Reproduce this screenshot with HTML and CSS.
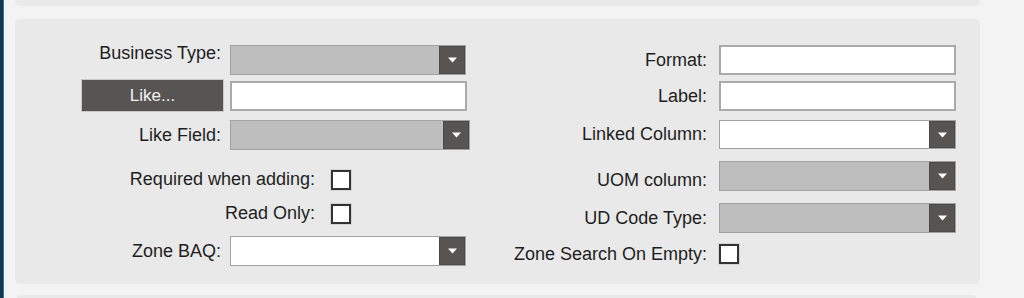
FILE: index.html
```html
<!DOCTYPE html>
<html>
<head>
<meta charset="utf-8">
<link rel="stylesheet" href="styles.css">
</head>
<body>
<div class="strip"></div>
<div class="main">
  <div class="panel-top"></div>
  <div class="panel">
    <div class="col col-left">
      <div class="row h30">
        <label class="lbl lbl-up">Business Type:</label>
        <div class="select disabled w236"><div class="sel-val"></div><div class="arrow"><svg width="9" height="6" viewBox="0 0 9 6"><polygon points="0,0.5 9,0.5 4.5,5.5" fill="#fff"/></svg></div></div>
      </div>
      <div class="row h33 mt4">
        <button class="like-btn">Like...</button>
        <div class="textbox w237"></div>
      </div>
      <div class="row h30 mt8">
        <label class="lbl">Like Field:</label>
        <div class="select disabled w240"><div class="sel-val"></div><div class="arrow"><svg width="9" height="6" viewBox="0 0 9 6"><polygon points="0,0.5 9,0.5 4.5,5.5" fill="#fff"/></svg></div></div>
      </div>
      <div class="row h27 mt16 chkrow">
        <label class="lbl lbl-wide">Required when adding:</label>
        <div class="checkbox"></div>
      </div>
      <div class="row h27 mt7 chkrow">
        <label class="lbl lbl-wide">Read Only:</label>
        <div class="checkbox"></div>
      </div>
      <div class="row h30 mt9">
        <label class="lbl">Zone BAQ:</label>
        <div class="select w236"><div class="sel-val"></div><div class="arrow"><svg width="9" height="6" viewBox="0 0 9 6"><polygon points="0,0.5 9,0.5 4.5,5.5" fill="#fff"/></svg></div></div>
      </div>
    </div>
    <div class="col col-right">
      <div class="row h30">
        <label class="lbl rl">Format:</label>
        <div class="textbox w237"></div>
      </div>
      <div class="row h30 mt6">
        <label class="lbl rl">Label:</label>
        <div class="textbox w237"></div>
      </div>
      <div class="row h29 mt9">
        <label class="lbl rl">Linked Column:</label>
        <div class="select w237"><div class="sel-val"></div><div class="arrow"><svg width="9" height="6" viewBox="0 0 9 6"><polygon points="0,0.5 9,0.5 4.5,5.5" fill="#fff"/></svg></div></div>
      </div>
      <div class="row h30 mt12">
        <label class="lbl rl lbl-down">UOM column:</label>
        <div class="select disabled w237"><div class="sel-val"></div><div class="arrow"><svg width="9" height="6" viewBox="0 0 9 6"><polygon points="0,0.5 9,0.5 4.5,5.5" fill="#fff"/></svg></div></div>
      </div>
      <div class="row h30 mt12">
        <label class="lbl rl">UD Code Type:</label>
        <div class="select disabled w237"><div class="sel-val"></div><div class="arrow"><svg width="9" height="6" viewBox="0 0 9 6"><polygon points="0,0.5 9,0.5 4.5,5.5" fill="#fff"/></svg></div></div>
      </div>
      <div class="row h20 mt11">
        <label class="lbl rl">Zone Search On Empty:</label>
        <div class="checkbox"></div>
      </div>
    </div>
  </div>
  <div class="panel-bottom"></div>
</div>
</body>
</html>
```
FILE: styles.css
```css
* { box-sizing: border-box; }
html, body {
  margin: 0;
  padding: 0;
  width: 1024px;
  height: 298px;
  overflow: hidden;
  background: #f3f3f4;
  font-family: "Liberation Sans", Arial, sans-serif;
}
body {
  display: flex;
  flex-direction: row;
}
.strip {
  width: 4px;
  height: 298px;
  background: #0f3857;
  border-right: 1px solid #4a6f8c;
  flex: none;
}
.main {
  padding-left: 11px;
  width: 976px;
  height: 298px;
  display: flex;
  flex-direction: column;
}
.panel-top {
  flex: none;
  height: 6px;
  width: 965px;
  background: #e9e9e9;
  border-radius: 0 0 5px 5px;
}
.panel {
  flex: none;
  margin-top: 13px;
  width: 965px;
  height: 265px;
  background: #e9e9e9;
  border-radius: 5px;
  padding: 26px 0 0 66px;
  display: grid;
  grid-template-columns: 419px 1fr;
  align-items: start;
}
.panel-bottom {
  flex: none;
  margin-top: 11px;
  margin-left: 2px;
  width: 959px;
  height: 3px;
  background: #e9e9e9;
  border-radius: 3px 3px 0 0;
}
.col {
  display: flex;
  flex-direction: column;
}
.row {
  display: flex;
  align-items: center;
}
.h20 { height: 20px; }
.h27 { height: 27px; }
.h29 { height: 29px; }
.h30 { height: 30px; }
.h33 { height: 33px; }
.mt4 { margin-top: 4px; }
.mt6 { margin-top: 6px; }
.mt7 { margin-top: 7px; }
.mt8 { margin-top: 8px; }
.mt9 { margin-top: 9px; }
.mt11 { margin-top: 11px; }
.mt12 { margin-top: 12px; }
.mt16 { margin-top: 16px; }

.lbl {
  width: 143px;
  flex: none;
  text-align: right;
  padding-right: 3px;
  margin-right: 6px;
  font-size: 18px;
  color: #1e1e1e;
  white-space: nowrap;
}
.lbl-up {
  align-self: flex-start;
  margin-top: -2px;
}
.lbl-down {
  margin-top: 8px;
}
.lbl-wide {
  width: 237px;
  margin-right: 13px;
}
.rl {
  width: 207px;
  padding-right: 0;
  margin-right: 12px;
}
.like-btn {
  width: 143px;
  height: 33px;
  flex: none;
  margin: 0 6px 0 0;
  padding: 0;
  background: #575553;
  border: 1px solid #c9c9c9;
  color: #f2f2f2;
  font-family: "Liberation Sans", Arial, sans-serif;
  font-size: 17px;
}
.textbox {
  height: 30px;
  background: #fff;
  border: 2px solid #aaaaaa;
  flex: none;
}
.w236 { width: 236px; }
.w237 { width: 237px; }
.w240 { width: 240px; }
.select {
  height: 30px;
  display: flex;
  background: #fff;
  border: 1px solid #a2a2a2;
  flex: none;
}
.h29 .select { height: 29px; }
.select.disabled { background: #bebebe; }
.sel-val { flex: 1; }
.arrow {
  width: 26px;
  flex: none;
  background: #565554;
  border: 1px solid #4a4a4a;
  display: flex;
  align-items: center;
  justify-content: center;
}
.arrow svg { display: block; }
.checkbox {
  width: 20px;
  height: 20px;
  background: #fff;
  border: 2px solid #333;
  box-shadow: 0 0 0 1px #d4d4d4;
  flex: none;
}
```
